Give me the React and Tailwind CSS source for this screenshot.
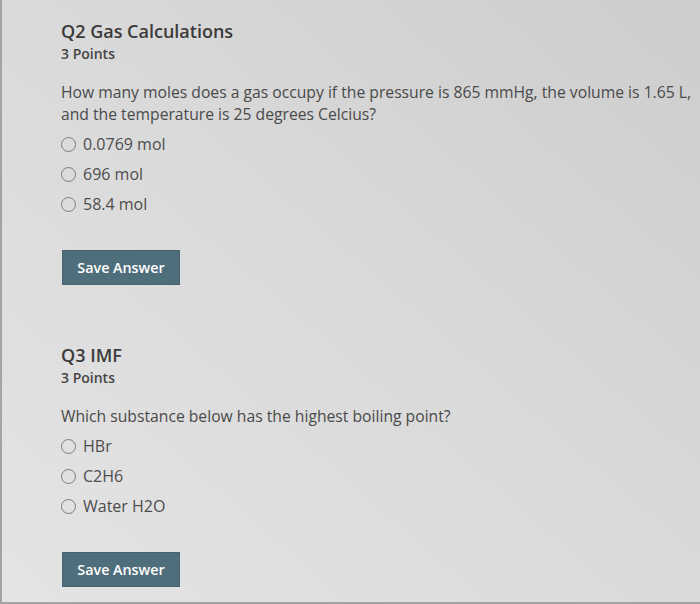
const questions = [
  {
    id: 'q2',
    title: 'Q2 Gas Calculations',
    points: 3,
    prompt:
      'How many moles does a gas occupy if the pressure is 865 mmHg, the volume is 1.65 L, and the temperature is 25 degrees Celcius?',
    options: ['0.0769 mol', '696 mol', '58.4 mol'],
  },
  {
    id: 'q3',
    title: 'Q3 IMF',
    points: 3,
    prompt: 'Which substance below has the highest boiling point?',
    options: ['HBr', 'C2H6', 'Water H2O'],
  },
]

function Question({ q, first }) {
  return (
    <section className={first ? '' : 'mt-[58px]'}>
      <h2 className="text-[18px] leading-[25px] font-semibold text-[#3b3b3b]">{q.title}</h2>
      <p className="text-[14px] leading-[19px] font-semibold text-[#454545]">{q.points} Points</p>
      <p className="mt-[18px] text-[15.7px] leading-[22px] text-[#4a4a4a]">{q.prompt}</p>
      <div className="mt-1 flex flex-col">
        {q.options.map((opt) => (
          <label key={opt} className="flex h-[30px] items-center gap-[7px] text-[16px] text-[#4d4d4d]">
            <span className="h-[15px] w-[15px] rounded-full border-[1.5px] border-[#7d7d7d]" />
            {opt}
          </label>
        ))}
      </div>
      <button className="mt-[31px] ml-px h-[35px] w-[118px] border border-[#46626e] bg-[#4f6e7b] text-[14.3px] font-semibold text-white">
        Save Answer
      </button>
    </section>
  )
}

export default function App() {
  return (
    <div className="h-[604px] w-[700px] overflow-hidden border-l-2 border-b-2 border-[#a3a3a3] bg-linear-to-bl from-[#cdcdcd] via-[#dadada] to-[#e4e4e4] font-['Open_Sans',sans-serif]">
      <div className="pl-[59px] pt-[19px]">
        {questions.map((q, i) => (
          <Question key={q.id} q={q} first={i === 0} />
        ))}
      </div>
    </div>
  )
}
